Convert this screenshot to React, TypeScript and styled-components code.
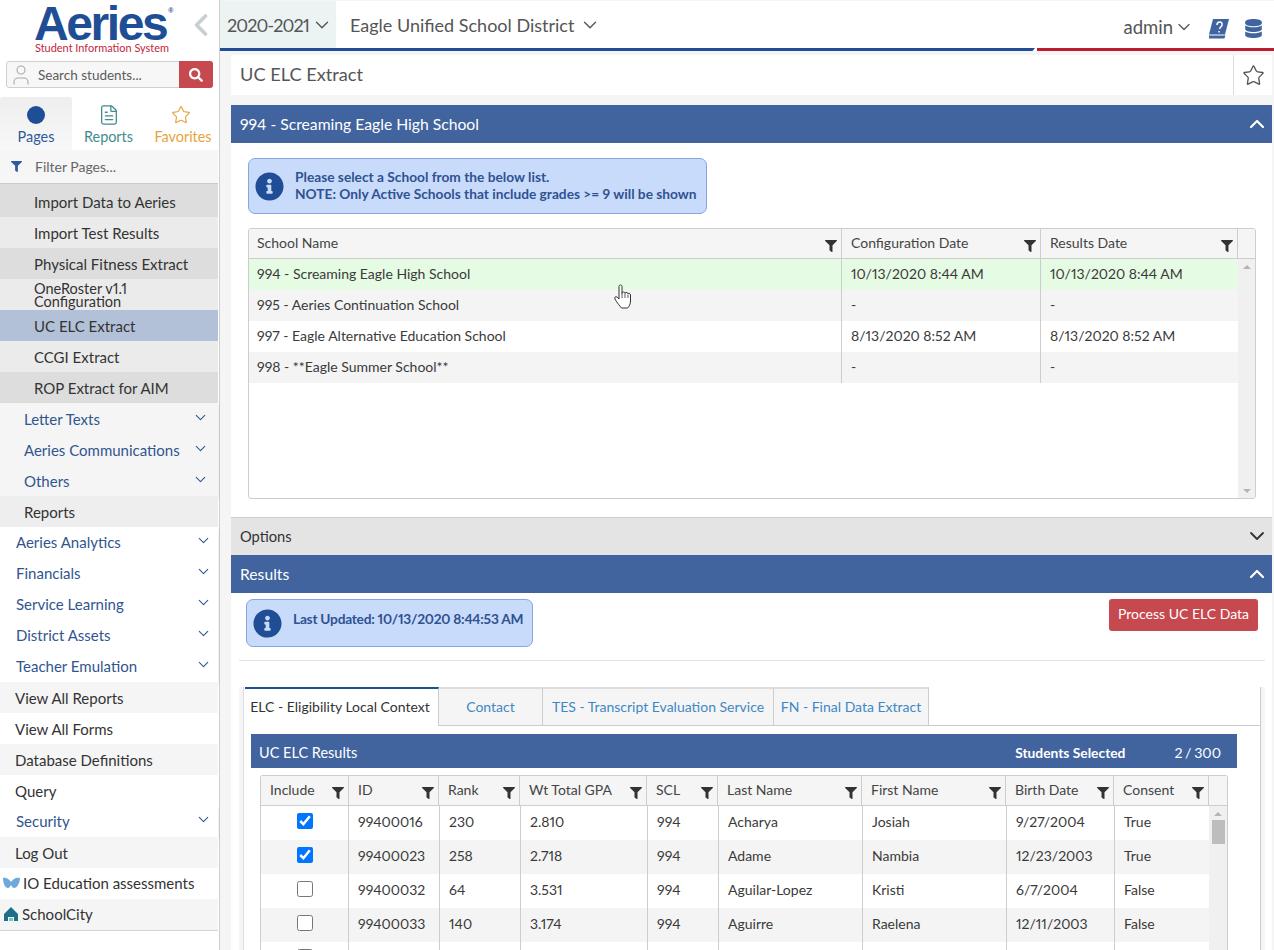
import React from "react";
import styled, { createGlobalStyle } from "styled-components";
import { ChevronDown, ChevronUp, ChevronLeft, FileText, Star, User } from "lucide-react";
import { FaDatabase, FaFilter, FaInfoCircle, FaSearch } from "react-icons/fa";

const Global = createGlobalStyle`
  html, body { margin: 0; padding: 0; height: 950px; overflow: hidden; background: #f5f5f5; }
  * { box-sizing: border-box; }
  body { font-family: "Lato", "Open Sans", sans-serif; font-size: 14px; color: #3a3a3a; font-variant-numeric: proportional-nums; }
`;

const Page = styled.div`
  display: flex; width: 1274px; height: 950px; overflow: hidden; position: relative;
`;
const Sidebar = styled.aside`
  width: 220px; flex: none; background: #fff; border-right: 1px solid #cfcfcf; height: 950px;
`;
const LogoRow = styled.div`
  height: 60px; display: flex; position: relative; padding-left: 34px;
`;
const LogoBlock = styled.div`
  display: flex; flex-direction: column; align-items: flex-start; width: 150px;
`;
const LogoText = styled.div`
  font-family: "Liberation Sans", sans-serif; font-weight: 700; font-size: 48px; line-height: 36px;
  letter-spacing: -2.4px; color: #1f4e96; margin-top: 6px; padding-right: 4px; position: relative; white-space: nowrap;
  sup { position: absolute; font-size: 7px; letter-spacing: 0; line-height: 7px; top: 1px; right: -3px; }
`;
const LogoSub = styled.div`
  font-size: 10.95px; line-height: 11px; color: #c0283c; white-space: nowrap; margin: 0 0 0 1px;
`;
const Collapse = styled.div`
  position: absolute; left: 183px; top: 7px; color: #c9ced1;
`;
const SearchBar = styled.div`
  display: flex; height: 27px; margin: 1px 6px 0 6px; width: 207px; border: 1px solid #cfcfcf; border-radius: 3px; background: #f7f7f7;
`;
const SearchField = styled.div`
  flex: 1; display: flex; align-items: center; gap: 5px; padding-left: 2px; color: #5c5c5c; font-size: 13.5px;
  svg { color: #a8a8a8; }
`;
const SearchBtn = styled.div`
  width: 34px; margin: -1px -1px -1px 0; background: #c6494f; color: #fff; border-radius: 0 3px 3px 0;
  display: flex; align-items: center; justify-content: center;
`;
const Tabs = styled.div`
  display: flex; margin-top: 9px; height: 53px; width: 218px;
`;
const NavTab = styled.div<{ $c: string; $active?: boolean; $w: number; $shift?: number }>`
  width: ${p => p.$w}px; color: ${p => p.$c}; display: flex; flex-direction: column; align-items: center; padding: 9px 0 0 ${p => p.$shift ?? 0}px;
  background: ${p => (p.$active ? "linear-gradient(#eeeeee, #f8f8f8)" : "#fff")};
  border-radius: 3px 3px 0 0; font-size: 14.4px; line-height: 18px;
`;
const Dot = styled.span`
  width: 18px; height: 18px; border-radius: 50%; background: #1f4e96; margin-bottom: 4px;
`;
const TabIconWrap = styled.span<{ $left?: number }>`
  height: 18px; margin: 0 ${p => p.$left ?? 0}px 4px 0; display: flex; align-items: center;
`;
const FilterRow = styled.div`
  height: 34px; width: 218px; background: #f6f6f6; display: flex; align-items: center; padding-left: 11px; gap: 13px;
  color: #666; border-bottom: 1px solid #ccc; font-size: 14px;
  svg { color: #2f5a9c; }
`;
const NavList = styled.div`
  width: 218px; display: flex; flex-direction: column;
`;
const tones: Record<string, string> = {
  dark: "#dcdddc", mid: "#ebebeb", active: "#b3c1d8", sub: "#f5f5f5", rep: "#eeeeee", white: "#fff",
};
const NavRow = styled.div<{ $bg: string; $pad: number; $link?: boolean; $h?: number; $shadow?: boolean; $dy?: number; $up?: number; $right?: number }>`
  height: ${p => p.$h ?? 31}px; flex: none; background: ${p => tones[p.$bg]};
  padding: ${p => p.$dy ?? 0}px ${p => p.$right ?? 12}px ${p => p.$up ?? 0}px ${p => p.$pad}px;
  display: flex; align-items: center; justify-content: space-between;
  color: ${p => (p.$link ? "#31558f" : "#333")}; font-size: 15px;
  box-shadow: ${p => (p.$shadow ? "0 2px 3px rgba(0,0,0,.14)" : "none")};
  position: relative;
  svg { color: #31558f; flex: none; margin-top: -3px; }
`;
const TightLabel = styled.span`
  line-height: 13px; font-size: 14.5px;
`;
const ExtRow = styled.div<{ $bg: string }>`
  height: 31px; background: ${p => tones[p.$bg]}; display: flex; align-items: center; gap: 2px; padding: 0 0 2px 2px; color: #333; font-size: 15px;
`;
const NavEnd = styled.div`
  height: 1px; background: #d4d4d4;
`;
const Main = styled.main`
  flex: 1; min-width: 0; display: flex; flex-direction: column; background: #f5f5f5;
`;
const TopBar = styled.div`
  height: 48px; flex: none; background: #fff; border-top: 1px solid #f5f5f5; display: flex; align-items: stretch; font-size: 18px; color: #555;
`;
const YearCell = styled.div`
  width: 116px; background: #ebf3f3; display: flex; align-items: center; justify-content: space-between; padding: 0 3px 0 7px; white-space: nowrap;
`;
const YearText = styled.span`
  letter-spacing: -0.9px;
`;
const DistrictCell = styled.div`
  display: flex; align-items: center; gap: 5px; padding-left: 14px; flex: 1; white-space: nowrap;
`;
const TopRight = styled.div`
  display: flex; align-items: center; padding: 7px 11px 0 0;
`;
const AdminLabel = styled.div`
  display: flex; align-items: center; gap: 1px; margin: -3px 14px 0 0; font-size: 18.5px;
`;
const DbIcon = styled.span`
  color: #3f649f; margin-left: 14px; display: flex;
`;
const Rule = styled.div`
  height: 3px; flex: none; display: flex; background: #fff; overflow: hidden;
`;
const RuleBlue = styled.div`
  width: 815px; background: #1f4e96; clip-path: polygon(0 0, 100% 0, 99.7% 100%, 0 100%);
`;
const RuleRed = styled.div`
  flex: 1; margin-left: 2px; background: #bd1c2e;
`;
const Content = styled.div`
  padding: 4px 2px 0 11px; flex: 1; min-height: 0; display: flex; flex-direction: column;
`;
const TitleBar = styled.div`
  height: 40px; flex: none; background: #fff; display: flex; align-items: center; justify-content: space-between; padding-left: 9px;
  font-size: 18.2px; color: #555; margin-bottom: 10px;
`;
const TitleText = styled.span`
  margin-top: -2px;
`;
const StarCell = styled.div`
  width: 39px; height: 40px; border-left: 1px solid #ddd; display: flex; align-items: center; justify-content: center; color: #555;
`;
const SectionHead = styled.div<{ $muted?: boolean }>`
  height: 38px; flex: none; display: flex; align-items: center; justify-content: space-between; padding: 0 3px ${p => (p.$muted ? 2 : 0)}px 9px;
  background: ${p => (p.$muted ? "#e4e4e4" : "#41649f")}; color: ${p => (p.$muted ? "#333" : "#fff")};
  border-top: ${p => (p.$muted ? "1px solid #cfcfcf" : "none")};
  font-size: ${p => (p.$muted ? 14.7 : 15.7)}px;
`;
const Panel = styled.div<{ $h: number }>`
  height: ${p => p.$h}px; flex: none; background: #fff; padding: 15px 16px 0 17px;
`;
const Alert = styled.div<{ $w: number; $h: number }>`
  width: ${p => p.$w}px; height: ${p => p.$h}px; background: #c9dbfb; border: 1px solid #86a6dc; border-radius: 7px;
  display: flex; align-items: center; gap: 11px; padding-left: 6px; color: #2f5291; font-weight: 700; font-size: 13.72px; line-height: 17px;
  svg { color: #1f4e96; flex: none; }
`;
const AlertText = styled.div`
  margin-top: -2px;
`;
const RaisedText = styled.div`
  margin-top: -9px; letter-spacing: -0.24px;
`;
const Grid = styled.div`
  margin-top: 14px; width: 1008px; height: 271px; border: 1px solid #cdcdcd; border-radius: 3px; display: flex; flex-direction: column; overflow: hidden;
`;
const GridHead = styled.div`
  display: flex; flex: none; height: 30px; background: #f5f5f5; border-bottom: 1px solid #cdcdcd;
`;
const HeadCell = styled.div<{ $w: number; $pl?: number }>`
  width: ${p => p.$w}px; flex: none; border-right: 1px solid #cdcdcd; padding: 0 4px 2px ${p => p.$pl ?? 9}px; display: flex; align-items: center; justify-content: space-between;
  font-size: 14px; color: #444;
  svg { color: #333; margin-top: 7px; }
`;
const GridBody = styled.div`
  flex: 1; min-height: 0; display: flex;
`;
const Rows = styled.div`
  flex: 1;
`;
const Row = styled.div<{ $bg: string; $h: number }>`
  display: flex; height: ${p => p.$h}px; background: ${p => p.$bg};
`;
const Cell = styled.div<{ $w: number; $center?: boolean; $last?: boolean; $lift?: number; $pl?: number }>`
  width: ${p => p.$w}px; flex: none; padding: 0 0 ${p => p.$lift ?? 2}px ${p => (p.$center ? 0 : p.$pl ?? 9)}px; display: flex; align-items: center;
  justify-content: ${p => (p.$center ? "center" : "flex-start")};
  border-right: ${p => (p.$last ? "none" : "1px solid #cdcdcd")}; font-size: 14px; color: #3a3a3a;
`;
const ScrollBar = styled.div<{ $w: number }>`
  width: ${p => p.$w}px; flex: none; background: #f0f0f0; position: relative; display: flex; flex-direction: column; align-items: center; padding-top: 6px;
`;
const ArrowUp = styled.span`
  width: 0; height: 0; border-left: 4px solid transparent; border-right: 4px solid transparent; border-bottom: 4px solid #b5b5b5;
`;
const ArrowDown = styled(ArrowUp)`
  position: absolute; bottom: 5px; border-bottom: 0; border-top: 4px solid #b5b5b5;
`;
const Thumb = styled.span`
  width: 13px; height: 24px; background: #bdbdbd; margin-top: 4px;
`;
const ResultsPanel = styled.div`
  flex: 1; min-height: 0; background: #fff; padding: 6px 7px 0 8px; overflow: hidden;
`;
const ResultsTop = styled.div`
  display: flex; justify-content: space-between; padding: 0 7px 0 7px; height: 62px; width: 1026px; border-bottom: 1px solid #e2e2e2;
  margin-bottom: 26px;
`;
const RedBtn = styled.div`
  width: 149px; height: 32px; border-radius: 3px; background: #c6494f; color: #fff; display: flex; align-items: center; justify-content: center; font-size: 14px; padding-bottom: 3px;
`;
const TabsFrame = styled.div`
  width: 1026px; padding: 0 4px; background: #f5f5f5;
`;
const TabStrip = styled.div`
  display: flex; height: 39px; align-items: stretch; background: #fff; padding-left: 1px; border-left: 1px solid #ddd;
`;
const TabBtn = styled.div<{ $w: number; $active?: boolean }>`
  width: ${p => p.$w}px; flex: none; display: flex; align-items: center; justify-content: center; font-size: 14px;
  padding: 0 ${p => (p.$active ? 3 : 0)}px 2px 0;
  color: ${p => (p.$active ? "#333" : "#3f88c5")};
  background: ${p => (p.$active ? "#fff" : "#f5f5f5")};
  border-top: 2px solid ${p => (p.$active ? "#1f4e96" : "#ddd")};
  border-right: 1px solid #ccc;
  border-bottom: ${p => (p.$active ? "none" : "1px solid #ccc")};
`;
const TabFill = styled.div`
  flex: 1; border-bottom: 1px solid #ccc; border-right: 1px solid #ccc;
`;
const TabPanel = styled.div`
  width: 1018px; height: 240px; border-left: 1px solid #ddd; border-right: 1px solid #ccc; padding: 8px 0 0 7px; background: #fff;
`;
const ResHead = styled.div`
  width: 986px; height: 34px; background: #41649f; color: #fff; display: flex; align-items: center; font-size: 14.5px; padding: 2px 16px 0 8px;
`;
const ResTitle = styled.span`
  flex: 1;
`;
const ResCount = styled.span`
  font-size: 13.8px; font-weight: 700; margin-right: 49px;
`;
const ResTotal = styled.span`
  word-spacing: -1px; font-size: 14.2px;
`;
const ResGrid = styled.div`
  margin: 7px 0 0 9px; width: 968px; border: 1px solid #cdcdcd; border-radius: 3px; border-bottom: none;
`;
const Check = styled.input`
  width: 16px; height: 16px; margin: 0 0 2px; accent-color: #0075ff;
`;
const HandCursor = styled.div`
  position: absolute; left: 614px; top: 284px; width: 18px; height: 25px;
`;

const F = () => <FaFilter size={12} />;

type Item = { t: string; bg: string; pad: number; link?: boolean; chev?: boolean; shadow?: boolean; right?: number; up?: number };
const nav: Item[] = [
  { t: "Import Test Results", bg: "mid", pad: 34 },
  { t: "Physical Fitness Extract", bg: "dark", pad: 34 },
];
const nav2: Item[] = [
  { t: "UC ELC Extract", bg: "active", pad: 34 },
  { t: "CCGI Extract", bg: "mid", pad: 34 },
  { t: "ROP Extract for AIM", bg: "dark", pad: 34 },
  { t: "Letter Texts", bg: "sub", pad: 24, link: true, chev: true, shadow: true, right: 9 },
  { t: "Aeries Communications", bg: "sub", pad: 24, link: true, chev: true, shadow: true, right: 9 },
  { t: "Others", bg: "sub", pad: 24, link: true, chev: true, shadow: true, right: 9 },
  { t: "Reports", bg: "rep", pad: 24 },
  { t: "Aeries Analytics", bg: "white", pad: 16, link: true, chev: true, shadow: true, right: 6, up: 2 },
  { t: "Financials", bg: "white", pad: 16, link: true, chev: true, shadow: true, right: 6, up: 2 },
  { t: "Service Learning", bg: "white", pad: 16, link: true, chev: true, shadow: true, right: 6, up: 2 },
  { t: "District Assets", bg: "white", pad: 16, link: true, chev: true, shadow: true, right: 6, up: 2 },
  { t: "Teacher Emulation", bg: "white", pad: 16, link: true, chev: true, shadow: true, right: 6, up: 2 },
  { t: "View All Reports", bg: "sub", pad: 15 },
  { t: "View All Forms", bg: "white", pad: 15 },
  { t: "Database Definitions", bg: "sub", pad: 15 },
  { t: "Query", bg: "white", pad: 15 },
  { t: "Security", bg: "white", pad: 16, link: true, chev: true, shadow: true, right: 6, up: 2 },
  { t: "Log Out", bg: "sub", pad: 15 },
];

const schools = [
  ["994 - Screaming Eagle High School", "10/13/2020 8:44 AM", "10/13/2020 8:44 AM"],
  ["995 - Aeries Continuation School", "-", "-"],
  ["997 - Eagle Alternative Education School", "8/13/2020 8:52 AM", "8/13/2020 8:52 AM"],
  ["998 - **Eagle Summer School**", "-", "-"],
];
const resCols = [
  { t: "Include", w: 88 }, { t: "ID", w: 90 }, { t: "Rank", w: 81 }, { t: "Wt Total GPA", w: 127 }, { t: "SCL", w: 71 },
  { t: "Last Name", w: 144 }, { t: "First Name", w: 144 }, { t: "Birth Date", w: 108 }, { t: "Consent", w: 95 },
];
const rowWidths = [91, 81, 127, 71, 144, 144, 108, 94];
const students: { c: boolean; v: string[] }[] = [
  { c: true, v: ["99400016", "230", "2.810", "994", "Acharya", "Josiah", "9/27/2004", "True"] },
  { c: true, v: ["99400023", "258", "2.718", "994", "Adame", "Nambia", "12/23/2003", "True"] },
  { c: false, v: ["99400032", "64", "3.531", "994", "Aguilar-Lopez", "Kristi", "6/7/2004", "False"] },
  { c: false, v: ["99400033", "140", "3.174", "994", "Aguirre", "Raelena", "12/11/2003", "False"] },
  { c: false, v: ["", "", "", "", "", "", "", ""] },
];

export default function App() {
  return (
    <Page>
      <Global />
      <Sidebar>
        <LogoRow>
          <LogoBlock>
            <LogoText>Aeries<sup>®</sup></LogoText>
            <LogoSub>Student Information System</LogoSub>
          </LogoBlock>
          <Collapse><ChevronLeft size={36} strokeWidth={2.4} /></Collapse>
        </LogoRow>
        <SearchBar>
          <SearchField><User size={24} strokeWidth={1.1} />Search students...</SearchField>
          <SearchBtn><FaSearch size={14} /></SearchBtn>
        </SearchBar>
        <Tabs>
          <NavTab $c="#2f5a9c" $active $w={72}><Dot />Pages</NavTab>
          <NavTab $c="#3f8c8f" $w={73}><TabIconWrap><FileText size={22} strokeWidth={1.4} /></TabIconWrap>Reports</NavTab>
          <NavTab $c="#e8a33d" $w={73} $shift={3}><TabIconWrap $left={4}><Star size={20} strokeWidth={1.4} /></TabIconWrap>Favorites</NavTab>
        </Tabs>
        <FilterRow><FaFilter size={11} />Filter Pages...</FilterRow>
        <NavList>
          <NavRow $bg="dark" $pad={34} $h={33} $dy={2}>Import Data to Aeries</NavRow>
          {nav.map(n => <NavRow key={n.t} $bg={n.bg} $pad={n.pad}>{n.t}</NavRow>)}
          <NavRow $bg="mid" $pad={34}><TightLabel>OneRoster v1.1<br />Configuration</TightLabel></NavRow>
          {nav2.map(n => (
            <NavRow key={n.t} $bg={n.bg} $pad={n.pad} $link={n.link} $shadow={n.shadow} $up={n.up} $right={n.right}>
              {n.t}{n.chev && <ChevronDown size={17} strokeWidth={1.5} />}
            </NavRow>
          ))}
          <ExtRow $bg="white">
            <svg width="19" height="12" viewBox="0 0 19 12"><path d="M1 1c3-1 6 1 8 4 2-3 5-5 9-4 0 5-3 10-6 10-1 0-2-1-3-3-1 2-2 3-3 3C3 11 1 6 1 1z" fill="#6fa8dc" /></svg>
            IO Education assessments
          </ExtRow>
          <ExtRow $bg="sub">
            <svg width="18" height="16" viewBox="0 0 18 16"><path d="M2 15V8l7-7 7 7v7h-4v-4H6v4z" fill="#1f6f8b" /><path d="M7 15v-3h4v3z" fill="#6cc" /></svg>
            SchoolCity
          </ExtRow>
          <NavEnd />
        </NavList>
      </Sidebar>
      <Main>
        <TopBar>
          <YearCell><YearText>2020-2021</YearText><ChevronDown size={22} strokeWidth={1.5} /></YearCell>
          <DistrictCell>Eagle Unified School District <ChevronDown size={22} strokeWidth={1.5} /></DistrictCell>
          <TopRight>
            <AdminLabel>admin<ChevronDown size={20} strokeWidth={1.5} /></AdminLabel>
            <svg width="22" height="21" viewBox="0 0 22 21">
              <path d="M5 1h16l-4 15.500H1z" fill="#3f649f" />
              <path d="M1 17.500h15.500l1-1-1 4H1z" fill="#3f649f" />
              <path d="M9 7c0-4 6-4 5 0-.5 2-2 2-2.500 4M11 13v1.500" stroke="#fff" strokeWidth="1.500" fill="none" />
            </svg>
            <DbIcon><FaDatabase size={19} /></DbIcon>
          </TopRight>
        </TopBar>
        <Rule><RuleBlue /><RuleRed /></Rule>
        <Content>
          <TitleBar><TitleText>UC ELC Extract</TitleText><StarCell><Star size={23} strokeWidth={1.4} /></StarCell></TitleBar>
          <SectionHead>994 - Screaming Eagle High School<ChevronUp size={24} strokeWidth={2.2} /></SectionHead>
          <Panel $h={374}>
            <Alert $w={459} $h={56}>
              <FaInfoCircle size={29} />
              <AlertText>Please select a School from the below list.<br />NOTE: Only Active Schools that include grades &gt;= 9 will be shown</AlertText>
            </Alert>
            <Grid>
              <GridHead>
                <HeadCell $w={593} $pl={8}>School Name<F /></HeadCell>
                <HeadCell $w={199}>Configuration Date<F /></HeadCell>
                <HeadCell $w={197}>Results Date<F /></HeadCell>
              </GridHead>
              <GridBody>
                <Rows>
                  {schools.map((s, i) => (
                    <Row key={s[0]} $h={31} $bg={i === 0 ? "#e6fbe3" : i % 2 ? "#f4f4f4" : "#fff"}>
                      <Cell $w={593} $pl={8}>{s[0]}</Cell>
                      <Cell $w={199}>{s[1]}</Cell>
                      <Cell $w={197} $last>{s[2]}</Cell>
                    </Row>
                  ))}
                </Rows>
                <ScrollBar $w={17}><ArrowUp /><ArrowDown /></ScrollBar>
              </GridBody>
            </Grid>
          </Panel>
          <SectionHead $muted>Options<ChevronDown size={24} strokeWidth={1.8} /></SectionHead>
          <SectionHead>Results<ChevronUp size={24} strokeWidth={2.2} /></SectionHead>
          <ResultsPanel>
            <ResultsTop>
              <Alert $w={287} $h={48}>
                <FaInfoCircle size={29} />
                <RaisedText>Last Updated: 10/13/2020 8:44:53 AM</RaisedText>
              </Alert>
              <RedBtn>Process UC ELC Data</RedBtn>
            </ResultsTop>
            <TabsFrame>
              <TabStrip>
                <TabBtn $w={194} $active>ELC - Eligibility Local Context</TabBtn>
                <TabBtn $w={104}>Contact</TabBtn>
                <TabBtn $w={231}>TES - Transcript Evaluation Service</TabBtn>
                <TabBtn $w={155}>FN - Final Data Extract</TabBtn>
                <TabFill />
              </TabStrip>
              <TabPanel>
                <ResHead>
                  <ResTitle>UC ELC Results</ResTitle>
                  <ResCount>Students Selected</ResCount>
                  <ResTotal>2 / 300</ResTotal>
                </ResHead>
                <ResGrid>
                  <GridHead>
                    {resCols.map(c => <HeadCell key={c.t} $w={c.w}>{c.t}<F /></HeadCell>)}
                  </GridHead>
                  <GridBody>
                    <Rows>
                      {students.map((s, i) => (
                        <Row key={i} $h={34} $bg={i % 2 ? "#f4f4f4" : "#fff"}>
                          <Cell $w={88} $center><Check type="checkbox" readOnly checked={s.c} /></Cell>
                          {s.v.map((v, j) => <Cell key={j} $w={rowWidths[j]} $last={j === 7} $lift={4}>{v}</Cell>)}
                        </Row>
                      ))}
                    </Rows>
                    <ScrollBar $w={18}><ArrowUp /><Thumb /></ScrollBar>
                  </GridBody>
                </ResGrid>
              </TabPanel>
            </TabsFrame>
          </ResultsPanel>
        </Content>
      </Main>
      <HandCursor>
        <svg width="18" height="25" viewBox="0 0 18 25">
          <path d="M5 2.500c0-2 3-2 3 0v7c0-2 3-2 3 0 0-1.500 3-1.500 3 .5 0-1 2.500-1 2.500 1v6c0 3-1.500 6-3 7H7.500C6 22 3 19 1 15c-1-2 1-3 2-2l2 2z" fill="#fff" stroke="#333" strokeWidth="1" />
          <path d="M8 9.500V14M11 10v4M14 10.500V14" stroke="#333" strokeWidth="0.800" />
        </svg>
      </HandCursor>
    </Page>
  );
}
